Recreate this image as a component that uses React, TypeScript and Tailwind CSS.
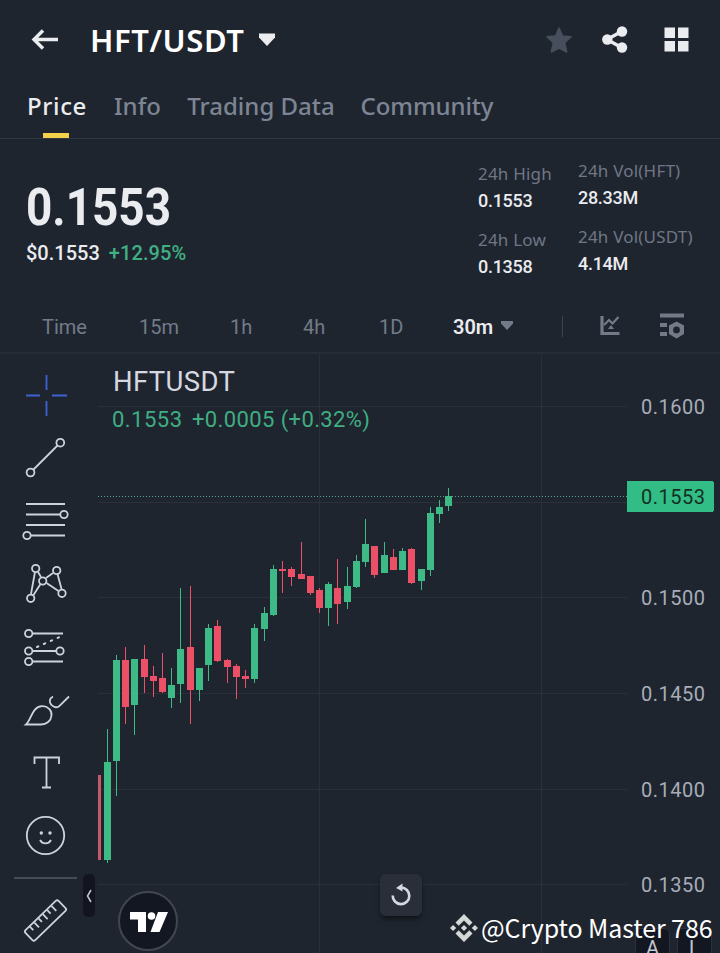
import { clsx } from "clsx";

type Candle = {
  x: number;
  high: number;
  top: number;
  bottom: number;
  low: number;
  up: boolean;
};

const UP = "#3dba86";
const DOWN = "#ec5066";

// [x, high, body top, body bottom, low, up]
const rows: [number, number, number, number, number, number][] = [
  [104, 729, 762, 860, 863, 1],
  [113, 655, 660, 761, 796, 1],
  [122, 647, 660, 707, 724, 0],
  [131, 659, 659, 705, 735, 1],
  [141, 645, 659, 677, 693, 0],
  [150, 666, 676, 681, 697, 0],
  [159, 653, 678, 692, 693, 0],
  [168, 668, 685, 698, 708, 1],
  [177, 588, 649, 684, 703, 1],
  [187, 586, 647, 690, 724, 0],
  [196, 668, 668, 690, 701, 1],
  [205, 624, 628, 665, 681, 1],
  [214, 620, 626, 661, 662, 0],
  [224, 659, 660, 667, 683, 0],
  [233, 664, 666, 677, 699, 0],
  [242, 670, 676, 679, 688, 0],
  [251, 624, 628, 679, 683, 1],
  [261, 607, 613, 629, 641, 1],
  [270, 565, 569, 615, 616, 1],
  [279, 561, 569, 571, 593, 0],
  [288, 567, 569, 577, 586, 0],
  [298, 542, 574, 579, 579, 0],
  [307, 576, 576, 593, 595, 0],
  [316, 588, 590, 608, 613, 0],
  [325, 582, 584, 608, 626, 1],
  [334, 559, 588, 604, 624, 0],
  [344, 567, 586, 602, 609, 1],
  [353, 555, 561, 587, 588, 1],
  [362, 519, 544, 562, 567, 1],
  [371, 546, 546, 575, 578, 0],
  [381, 542, 555, 573, 573, 1],
  [390, 549, 557, 570, 570, 0],
  [399, 548, 551, 570, 570, 1],
  [408, 548, 549, 583, 584, 0],
  [418, 569, 569, 581, 590, 1],
  [427, 507, 513, 570, 576, 1],
  [436, 500, 507, 514, 523, 1],
  [445, 488, 496, 506, 511, 1],
];

const candles: Candle[] = rows.map(([x, high, top, bottom, low, up]) => ({
  x,
  high,
  top,
  bottom,
  low,
  up: up === 1,
}));

const prices = [
  { label: "0.1600", y: 406 },
  { label: "", y: 502 },
  { label: "0.1500", y: 597 },
  { label: "0.1450", y: 693 },
  { label: "0.1400", y: 789 },
  { label: "0.1350", y: 884 },
];

const tabs = [
  { label: "Price", width: "w-[60px]", tracking: "tracking-[0.6px]" },
  { label: "Info", width: "w-[47px]", tracking: "tracking-normal" },
  { label: "Trading Data", width: "w-[146px]", tracking: "tracking-normal" },
  { label: "Community", width: "w-[132px]", tracking: "tracking-[-0.1px]" },
];

const intervals = [
  { label: "Time", width: "w-[97px]" },
  { label: "15m", width: "w-[91px]" },
  { label: "1h", width: "w-[73px]" },
  { label: "4h", width: "w-[76px]" },
  { label: "1D", width: "w-[74px]" },
];

function Header() {
  return (
    <header className="flex h-[80px] items-center pl-[31px]">
      <svg width="28" height="22" viewBox="0 0 28 22" fill="none" stroke="#eaecef" strokeWidth="3.4">
        <path d="M27 10.500H3M12 1.500l-9 9 9 9" />
      </svg>
      <h1 className="ml-[31px] w-[168px] text-[31px] leading-none font-semibold tracking-[0.6px] whitespace-nowrap text-white">
        HFT/USDT
      </h1>
      <svg width="18" height="14" viewBox="0 0 18 14" fill="#eaecef">
        <path d="M1 .5h16v4L9 13 1 4.500z" />
      </svg>
      <svg className="ml-[269px]" width="28" height="28" viewBox="0 0 28 28" fill="#474f5d" stroke="#474f5d" strokeWidth="1.500" strokeLinejoin="round">
        <path d="m14 2 3.500 8 8.500.8-6.300 6 2 9.200L14 22.200 6.300 26l2-9.200-6.300-6 8.500-.8z" />
      </svg>
      <svg className="ml-[28px]" width="28" height="28" viewBox="0 0 28 28" fill="#eaecef">
        <path d="M20.500 5.500 6 13.500l14.500 8" fill="none" stroke="#eaecef" strokeWidth="3.400" />
        <circle cx="21" cy="5.500" r="5.200" />
        <circle cx="6.300" cy="13.500" r="5.200" />
        <circle cx="21" cy="21.500" r="5.200" />
      </svg>
      <svg className="ml-[35px]" width="26" height="26" viewBox="0 0 26 26" fill="#eaecef">
        <path d="M.5.5H11V11H.5zM14 .5h10.500V11H14zM.5 14H11v10.500H.5zM14 14h10.500v10.500H14z" />
      </svg>
    </header>
  );
}

function Tabs() {
  return (
    <nav className="flex h-[59px] gap-[27px] border-b border-[#2f3741] pl-[27px]">
      {tabs.map((tab, i) => (
        <div
          key={tab.label}
          className={clsx(
            "flex flex-col items-center justify-between pt-[10px] text-2xl leading-8 font-medium whitespace-nowrap",
            tab.width,
            tab.tracking,
            i === 0 ? "text-[#eaecef]" : "text-[#7d8594]"
          )}
        >
          <span>{tab.label}</span>
          {i === 0 && <span className="mr-[2px] h-[5px] w-[26px] bg-[#f3d24b]" />}
        </div>
      ))}
    </nav>
  );
}

function Stat({ label, value }: { label: string; value: string }) {
  return (
    <div className="h-[66px] whitespace-nowrap">
      <div className="text-[17px] leading-[26px] tracking-[0.2px] text-[#6f7785]">{label}</div>
      <div className="pt-px font-[Roboto] text-lg leading-[26px] font-medium tracking-[-0.3px] text-[#eaecef]">{value}</div>
    </div>
  );
}

function Summary() {
  return (
    <section className="flex h-[161px] pl-[27px]">
      <div className="-ml-px w-[452px] pt-[44px] font-[Roboto]">
        <div className="origin-left scale-x-90 text-[51px] leading-[50px] font-bold text-[#eaecef]">0.1553</div>
        <div className="mt-[7px] flex gap-[9px] text-xl leading-[26px] font-medium">
          <span className="text-[#eaecef]">$0.1553</span>
          <span className="tracking-[0.1px] text-[#3fb083]">+12.95%</span>
        </div>
      </div>
      <div className="w-[100px] pt-[22px]">
        <Stat label="24h High" value="0.1553" />
        <Stat label="24h Low" value="0.1358" />
      </div>
      <div className="pt-[19px]">
        <Stat label="24h Vol(HFT)" value="28.33M" />
        <Stat label="24h Vol(USDT)" value="4.14M" />
      </div>
    </section>
  );
}

function Intervals() {
  return (
    <nav className="flex h-[54px] items-center border-b-2 border-[#262d37] pl-[42px] font-[Roboto] text-xl whitespace-nowrap text-[#737b89]">
      {intervals.map((item) => (
        <span key={item.label} className={clsx("pt-[2px]", item.width)}>
          {item.label}
        </span>
      ))}
      <span className="w-[48px] pt-[2px] font-semibold text-[#eaecef]">30m</span>
      <svg width="12" height="10" viewBox="0 0 12 10" fill="#737b89">
        <path d="M0 0h12v2.500L6 9 0 2.500z" />
      </svg>
      <span className="ml-[49px] h-[21px] w-px bg-[#3b434f]" />
      <svg className="ml-[37px]" width="20" height="20" viewBox="0 0 20 20" fill="none" stroke="#737b89">
        <path d="M2 0v17.500h17.500" strokeWidth="3.200" />
        <path d="m4 9 5-5 3.500 3.500L18.500 1" strokeWidth="2.200" />
        <path d="m11 9 3 4H8z" fill="#737b89" stroke="none" />
      </svg>
      <svg className="ml-[39px]" width="26" height="28" viewBox="0 0 26 28" fill="#737b89">
        <path d="M1 1.500h24v4H1zM1 11h7v4H1zM1 20h7v4H1z" />
        <path fillRule="evenodd" d="m17.500 9.500 7.500 4v8.500l-7.500 4.500-7.500-4.500v-8.500zM17.500 14.500a3.400 3.400 0 1 0 0 6.800 3.400 3.400 0 0 0 0-6.800z" />
      </svg>
    </nav>
  );
}

// Drawing tools, in a 98px wide column
function Toolbar() {
  return (
    <svg className="shrink-0" width="98" height="599" viewBox="0 354 98 599" fill="none" stroke="#cdd2dc" strokeWidth="1.8">
      <path d="M46.500 375v15M46.500 401v15M26 395.500h14M52 395.500h15" stroke="#3c63d2" />

      <path d="m33.500 469.500 24-24" />
      <circle cx="30.500" cy="472.500" r="3.900" />
      <circle cx="60.300" cy="442.700" r="3.900" />

      <path d="M26 504h39M26 514.500h34M26 525h39M31 535.500h34" />
      <circle cx="64" cy="514.500" r="3.700" />
      <circle cx="27" cy="535.500" r="3.700" />

      <path d="m31 594 4-22M38 572l3 5M40.500 584l-7 11M46 578l7-5M46.500 583l12 8M57.500 574l4 15" />
      <circle cx="35.700" cy="568.500" r="3.700" />
      <circle cx="56.700" cy="570.500" r="3.700" />
      <circle cx="42.700" cy="581" r="3.700" />
      <circle cx="30.700" cy="598.300" r="3.700" />
      <circle cx="62" cy="593.300" r="3.700" />

      <path d="M32.500 633.500H63M32.500 651H56M32.500 661.500H63" />
      <path d="m37 647 25-11" strokeWidth="2" strokeDasharray="1.500 6" strokeLinecap="round" />
      <circle cx="28.700" cy="633.500" r="3.700" />
      <circle cx="28.700" cy="651" r="3.700" />
      <circle cx="60" cy="651" r="3.700" />
      <circle cx="28.700" cy="661.500" r="3.700" />

      <path d="M26 724.500c5-4 6-18 16-18.300 6-.2 10 4 9.500 9.300-.5 5.500-5 9-10.500 9zM53 696.500c-4 2-4 6-1.500 8.500 2.500 2.700 6 3 8 .8l9.500-9.300" />

      <path d="M34.500 764v-6.500h24.500v6.500M46.500 757.500v30M42 787.500h9" />

      <circle cx="45.500" cy="835.500" r="18.700" />
      <path d="M40 840c2.500 4.500 8.500 4.500 11 0" />
      <circle cx="41.300" cy="833" r="1.700" fill="#cdd2dc" stroke="none" />
      <circle cx="50" cy="833" r="1.700" fill="#cdd2dc" stroke="none" />

      <path d="M14 878h63" stroke="#454b57" />

      <g transform="rotate(-44 45.500 920.500)">
        <rect x="22.500" y="913.500" width="46" height="14" rx="2" />
        <path d="M30 914v5M36 914v7M42 914v5M48 914v7M54 914v5M60 914v7" />
      </g>
    </svg>
  );
}

function Chart() {
  return (
    <svg className="shrink-0" width="622" height="599" viewBox="98 354 622 599" fontFamily="Roboto, sans-serif" shapeRendering="crispEdges">
      <g fill="#29303a">
        {prices.map((p) => (
          <rect key={p.y} x="98" y={p.y} width="529" height="1" />
        ))}
        <rect x="319" y="354" width="1" height="599" />
        <rect x="541" y="354" width="1" height="599" />
      </g>

      <rect x="98" y="775" width="3" height="85" fill="#c6586c" />
      {candles.map((c) => (
        <g key={c.x} fill={c.up ? UP : DOWN}>
          <rect x={c.x + 3} y={c.high} width="1" height={c.low - c.high} />
          <rect x={c.x} y={c.top} width="7" height={c.bottom - c.top} />
        </g>
      ))}

      <path d="M98 496.500h529" stroke="#57a488" strokeDasharray="1 2" />
      <path d="M627 481h84a3 3 0 0 1 3 3v25a3 3 0 0 1-3 3h-84z" fill="#32bd87" />
      <text x="641" y="503.500" fontSize="20" textLength="64" fill="#12301f">
        0.1553
      </text>
      <g fill="#a7adb9" fontSize="20">
        {prices
          .filter((p) => p.label)
          .map((p) => (
            <text key={p.y} x="641" y={p.y + 8} textLength="64">
              {p.label}
            </text>
          ))}
      </g>

      <text x="113" y="390.500" fontSize="27.500" textLength="122" fill="#d5d8e0">
        HFTUSDT
      </text>
      <g fill="#3fae83" fontSize="22">
        <text x="112" y="427" textLength="70">
          0.1553
        </text>
        <text x="192" y="427" textLength="178">
          +0.0005 (+0.32%)
        </text>
      </g>
    </svg>
  );
}

// Controls that float over the chart
function ChartOverlay() {
  return (
    <>
      <div className="absolute top-[519px] left-[82px] flex h-[45px] w-[14px] items-center justify-center rounded-md border border-[#20252f] bg-[#12151f]">
        <svg className="shrink-0" width="7" height="14" viewBox="0 0 7 14" fill="none" stroke="#c3c8d2" strokeWidth="1.500">
          <path d="M5 1 1.500 7 5 13" />
        </svg>
      </div>

      <div className="absolute top-[537px] left-[118px] flex size-[60px] items-center justify-center rounded-full border-2 border-[#43464f] bg-[#131722]">
        <svg className="mt-px ml-px" width="38" height="20" viewBox="0 0 38 20" fill="#fff">
          <path d="M0 0h16v20H8V7.500H0zM28 0h10l-8.500 20h-9z" />
          <circle cx="21.500" cy="4" r="3.800" />
        </svg>
      </div>

      <div className="absolute top-[520px] left-[380px] flex size-[42px] items-center justify-center rounded-md bg-[#2a2e39] shadow-md shadow-black/40">
        <svg width="20" height="24" viewBox="0 0 20 24" fill="none">
          <path d="M1.700 12.500a8.300 8.300 0 1 0 8.300-8" stroke="#d5d8e0" strokeWidth="2.600" />
          <path d="m5 5 6.500-4.500v8z" fill="#d5d8e0" />
        </svg>
      </div>

      <div className="absolute top-[574px] left-[635px] flex h-[25px] gap-[7px] overflow-hidden font-[Roboto] text-xl text-[#c3c8d2]">
        <div className="h-9 w-[35px] rounded-md border border-[#2b303b] bg-[#131722] pt-[9px] text-center leading-none">A</div>
        <div className="h-9 w-[35px] rounded-md border border-[#2b303b] bg-[#131722] pt-[9px] text-center leading-none">L</div>
      </div>

      <div className="absolute top-[557px] left-[450px] flex items-center gap-1 whitespace-nowrap text-white">
        <svg className="mt-[2px]" width="28" height="28" viewBox="0 0 28 28" fill="#d6d7d9">
          <path d="m14 0 8.500 8.500-3.200 3.200L14 6.400l-5.300 5.300-3.200-3.200zM14 28l8.500-8.500-3.200-3.200-5.300 5.300-5.300-5.300-3.200 3.200zM14 10.900l3.100 3.100-3.100 3.100-3.100-3.100zM3.100 10.900 6.200 14l-3.100 3.100L0 14zM24.900 10.900 28 14l-3.100 3.100-3.100-3.100z" />
        </svg>
        <span className="-ml-px font-['Noto_Sans_CJK_SC',sans-serif] text-[25px] leading-8 tracking-[-0.1px]">@Crypto Master 786</span>
      </div>
    </>
  );
}

export default function App() {
  return (
    <div className="h-[953px] w-[720px] overflow-hidden bg-[#1f252f] font-['Noto_Sans',sans-serif]">
      <Header />
      <Tabs />
      <Summary />
      <Intervals />
      <main className="relative flex h-[599px]">
        <Toolbar />
        <Chart />
        <ChartOverlay />
      </main>
    </div>
  );
}
